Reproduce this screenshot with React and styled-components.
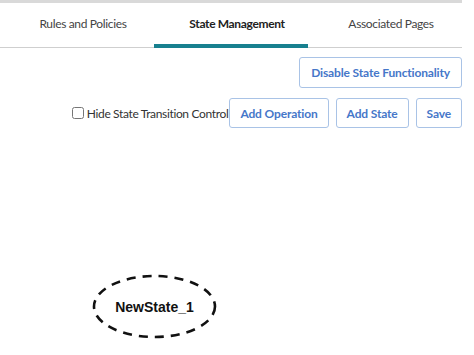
import React from 'react';
import styled, { createGlobalStyle } from 'styled-components';

const GlobalStyle = createGlobalStyle`
  html, body {
    margin: 0;
    padding: 0;
    background: #fff;
  }
  body {
    font-family: Lato, "Noto Sans", sans-serif;
  }
`;

const Page = styled.div`
  width: 462px;
  height: 355px;
  display: flex;
  flex-direction: column;
  border-top: 3px solid #d9d9d9;
  box-sizing: border-box;
`;

const TabBar = styled.nav`
  display: flex;
  height: 44px;
  border-bottom: 1px solid #cfcfcf;
`;

const Tab = styled.div`
  flex: 1;
  display: flex;
  align-items: center;
  justify-content: center;
  padding-left: 12px;
  font-size: 12px;
  letter-spacing: -0.35px;
  color: ${p => (p.active ? '#222' : '#444')};
  font-weight: ${p => (p.active ? 700 : 400)};
  border-bottom: 4px solid ${p => (p.active ? '#17808f' : 'transparent')};
  margin-bottom: -1px;
`;

const Toolbar = styled.div`
  display: flex;
  flex-direction: column;
  align-items: flex-end;
  gap: 10px;
  padding-top: 9px;
`;

const Row = styled.div`
  display: flex;
  align-items: center;
  gap: 7px;
`;

const Button = styled.button`
  height: ${p => (p.tall ? '31px' : '30px')};
  padding: 0 ${p => (p.tall ? 11 : 10)}px;
  background: #fff;
  border: 1px solid #a9c3e6;
  border-radius: 3px;
  color: #4677c9;
  font-family: Lato, "Noto Sans", sans-serif;
  font-weight: 700;
  font-size: 12px;
  letter-spacing: -0.15px;
  cursor: pointer;
`;

const CheckLabel = styled.label`
  display: flex;
  align-items: center;
  font-size: 12px;
  letter-spacing: -0.35px;
  color: #333;
  margin-right: -6px;

  input {
    margin: 0 3px 0 0;
    width: 12px;
    height: 12px;
  }
`;

const Canvas = styled.div`
  position: relative;
  flex: 1;
`;

const StateNode = styled.div`
  position: absolute;
  left: ${p => p.x}px;
  top: ${p => p.y}px;
  width: 125px;
  height: 65px;
  display: flex;
  align-items: center;
  justify-content: center;
  font-family: "Liberation Sans", Arial, sans-serif;
  font-weight: 700;
  font-size: 14px;
  color: #111;

  svg {
    position: absolute;
    inset: 0;
  }
  span {
    position: relative;
    margin-top: 1px;
  }
`;

export default function App() {
  return (
    <>
      <GlobalStyle />
      <Page>
        <TabBar>
          <Tab>Rules and Policies</Tab>
          <Tab active>State Management</Tab>
          <Tab>Associated Pages</Tab>
        </TabBar>
        <Toolbar>
          <Button tall>Disable State Functionality</Button>
          <Row>
            <CheckLabel>
              <input type="checkbox" />
              Hide State Transition Control
            </CheckLabel>
            <Button>Add Operation</Button>
            <Button>Add State</Button>
            <Button>Save</Button>
          </Row>
        </Toolbar>
        <Canvas>
          <StateNode x={92} y={146}>
            <svg width="125" height="65" viewBox="0 0 125 65">
              <ellipse
                cx="62.5"
                cy="32.5"
                rx="60.5"
                ry="30.5"
                fill="none"
                stroke="#111"
                strokeWidth="2.6"
                strokeDasharray="9 7"
              />
            </svg>
            <span>NewState_1</span>
          </StateNode>
        </Canvas>
      </Page>
    </>
  );
}
